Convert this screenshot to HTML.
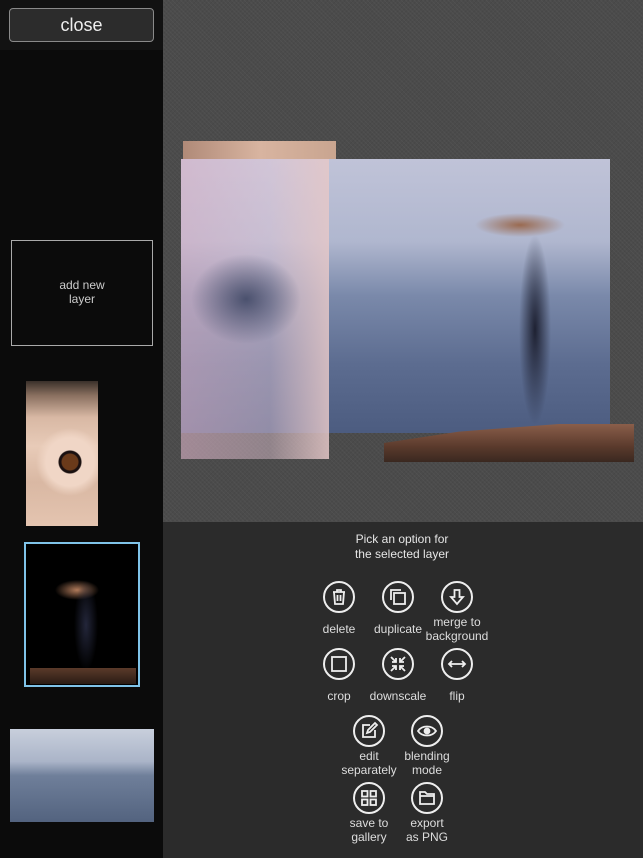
<!DOCTYPE html>
<html><head><style>
*{margin:0;padding:0;box-sizing:border-box}
body{width:643px;height:858px;overflow:hidden;background:#2b2b2b;font-family:"Liberation Sans",sans-serif;position:relative}
.abs{position:absolute}
#side{left:0;top:0;width:163px;height:858px;background:#0b0b0b}
#top{left:0;top:0;width:163px;height:50px;background:#121212}
#close{left:9px;top:8px;width:145px;height:34px;border:1px solid #8a8a8a;border-radius:4px;background:#2c2c2c;color:#eee;font-size:18px;text-align:center;line-height:32px}
#canvas{left:163px;top:0;width:480px;height:522px;background:#4b4b4b;background-image:repeating-linear-gradient(45deg,rgba(255,255,255,.03) 0 1px,transparent 1px 3px),repeating-linear-gradient(-45deg,rgba(0,0,0,.06) 0 1px,transparent 1px 3px)}
#panel{left:163px;top:522px;width:480px;height:336px;background:#2b2b2b}
.lbl{color:#ddd;font-size:12px;text-align:center;width:100px;line-height:14px}
.ic{width:32px;height:32px;border:2px solid #eee;border-radius:50%}
.ic svg{position:absolute;left:4px;top:4px}
</style></head><body>
<div id="side" class="abs"></div>
<div id="top" class="abs"></div>
<div id="close" class="abs">close</div>
<div class="abs" style="left:11px;top:240px;width:142px;height:106px;border:1px solid #aaa;color:#ccc;font-size:12px;text-align:center;padding-top:37px;line-height:14px">add new<br>layer</div>
<div class="abs" style="left:26px;top:381px;width:72px;height:145px;background:radial-gradient(circle at 42px 462px,transparent 0),radial-gradient(circle at 44px 81px,#6a3a1a 0 8px,#1a1010 9px 11px,#f0d6c6 12px 24px,transparent 34px),linear-gradient(180deg,#3a302a 0,#8a7060 10%,#d8b8a4 25%,#e8cbb8 45%,#d9b8a3 70%,#e4c4b0)"></div>
<div class="abs" style="left:24px;top:542px;width:116px;height:145px;border:2px solid #7fc3e8;background:#000"></div>
<div class="abs" style="left:52px;top:560px;width:56px;height:110px;background:radial-gradient(ellipse 12px 45px at 34px 65px,#23263a,transparent),radial-gradient(ellipse 22px 10px at 25px 30px,#b07a5a,transparent)"></div>
<div class="abs" style="left:30px;top:668px;width:106px;height:16px;background:linear-gradient(#5a3a2a,#2a1c14)"></div>
<div class="abs" style="left:10px;top:729px;width:144px;height:93px;background:linear-gradient(180deg,#c8cfdc,#aab4c8 35%,#6f7f9a 50%,#53637f)"></div>

<div id="canvas" class="abs"></div>
<div class="abs" style="left:183px;top:141px;width:153px;height:20px;background:linear-gradient(90deg,#b08a78,#d8b4a0,#c9a590)"></div>
<div class="abs" style="left:181px;top:159px;width:429px;height:274px;background:linear-gradient(180deg,#c0c3d8,#b0b7cf 30%,#7a89aa 50%,#5c6c90 75%,#4c5c80)"></div>
<div class="abs" style="left:181px;top:159px;width:148px;height:300px;background:radial-gradient(ellipse 55px 45px at 65px 140px,rgba(50,60,90,.8),transparent),linear-gradient(90deg,rgba(220,180,200,.6),rgba(230,200,215,.45) 60%,rgba(230,200,200,.85))"></div>
<div class="abs" style="left:384px;top:424px;width:250px;height:38px;background:linear-gradient(#8a5e4a,#5a3a2c 60%,#3a2820);clip-path:polygon(0 50%,30% 20%,70% 0,100% 0,100% 100%,0 100%)"></div>
<div class="abs" style="left:450px;top:180px;width:120px;height:245px;background:radial-gradient(ellipse 16px 95px at 85px 150px,#1e2132,transparent),radial-gradient(ellipse 45px 12px at 70px 45px,#9a6a50,transparent)"></div>

<div id="panel" class="abs"></div>
<div class="abs" style="left:302px;top:532px;width:200px;text-align:center;color:#e6e6e6;font-size:12px;line-height:15px">Pick an option for<br>the selected layer</div>

<div class="abs ic" style="left:323px;top:581px"><svg width="20" height="20" viewBox="0 0 20 20" fill="none" stroke="#eee" stroke-width="1.8"><path d="M4 5h12M8 5V3h4v2M5 5l1 12h8l1-12M8.5 8v6M11.5 8v6"/></svg></div>
<div class="abs ic" style="left:382px;top:581px"><svg width="20" height="20" viewBox="0 0 20 20" fill="none" stroke="#eee" stroke-width="1.8"><path d="M3 13V3h10"/><rect x="6" y="6" width="11" height="11"/></svg></div>
<div class="abs ic" style="left:441px;top:581px"><svg width="20" height="20" viewBox="0 0 20 20" fill="none" stroke="#eee" stroke-width="1.8"><path d="M7.5 3h5v7h3.5L10 17 4 10h3.5z"/></svg></div>
<div class="abs lbl" style="left:289px;top:622px">delete</div>
<div class="abs lbl" style="left:348px;top:622px">duplicate</div>
<div class="abs lbl" style="left:407px;top:615px">merge to<br>background</div>
<div class="abs ic" style="left:323px;top:648px"><svg width="20" height="20" viewBox="0 0 20 20" fill="none" stroke="#eee" stroke-width="1.8"><rect x="3" y="3" width="14" height="14"/></svg></div>
<div class="abs ic" style="left:382px;top:648px"><svg width="20" height="20" viewBox="0 0 20 20" fill="none" stroke="#eee" stroke-width="1.8"><path d="M3 3l5 5M8 4v4H4M17 3l-5 5M12 4v4h4M3 17l5-5M8 16v-4H4M17 17l-5-5M12 16v-4h4"/></svg></div>
<div class="abs ic" style="left:441px;top:648px"><svg width="20" height="20" viewBox="0 0 20 20" fill="none" stroke="#eee" stroke-width="1.8"><path d="M2 10h16M5 7l-3 3 3 3M15 7l3 3-3 3"/></svg></div>
<div class="abs lbl" style="left:289px;top:689px">crop</div>
<div class="abs lbl" style="left:348px;top:689px">downscale</div>
<div class="abs lbl" style="left:407px;top:689px">flip</div>
<div class="abs ic" style="left:353px;top:715px"><svg width="20" height="20" viewBox="0 0 20 20" fill="none" stroke="#eee" stroke-width="1.8"><path d="M11 4H4v12h12V9M8 12l1-3 7-7 2 2-7 7z"/></svg></div>
<div class="abs ic" style="left:411px;top:715px"><svg width="20" height="20" viewBox="0 0 20 20" fill="none" stroke="#eee" stroke-width="1.8"><path d="M1 10c4-6 14-6 18 0-4 6-14 6-18 0z"/><circle cx="10" cy="10" r="2.5" fill="#eee"/></svg></div>
<div class="abs lbl" style="left:319px;top:749px">edit<br>separately</div>
<div class="abs lbl" style="left:377px;top:749px">blending<br>mode</div>
<div class="abs ic" style="left:353px;top:782px"><svg width="20" height="20" viewBox="0 0 20 20" fill="none" stroke="#eee" stroke-width="1.8"><rect x="3" y="3" width="5.5" height="5.5"/><rect x="11.5" y="3" width="5.5" height="5.5"/><rect x="3" y="11.5" width="5.5" height="5.5"/><rect x="11.5" y="11.5" width="5.5" height="5.5"/></svg></div>
<div class="abs ic" style="left:411px;top:782px"><svg width="20" height="20" viewBox="0 0 20 20" fill="none" stroke="#eee" stroke-width="1.8"><path d="M3 4h5l2 2h7v10H3zM3 8h14"/></svg></div>
<div class="abs lbl" style="left:319px;top:816px">save to<br>gallery</div>
<div class="abs lbl" style="left:377px;top:816px">export<br>as PNG</div>
</body></html>
